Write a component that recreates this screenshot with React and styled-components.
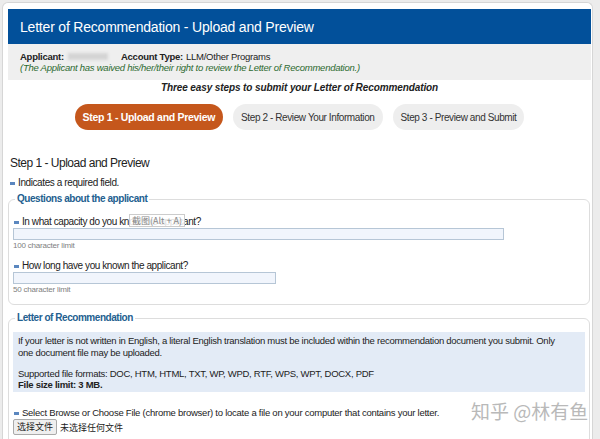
import styled, { createGlobalStyle } from "styled-components";

const Global = createGlobalStyle`
  html, body {
    margin: 0;
    background: #ececec;
    font-family: "Liberation Sans", Arial, sans-serif;
    color: #222;
  }
  * { box-sizing: border-box; }
`;

const Page = styled.div`
  position: relative;
  margin: 2px 0 0 2px;
  width: 591px;
  height: 437px;
  overflow: hidden;
  background: #fff;
  border: 1px solid #d6d6d6;
  border-bottom: none;
  border-radius: 6px 6px 0 0;
  padding: 6px 1px 0 5px;
`;

const Header = styled.div`
  background: #02509a;
  height: 35px;
  display: flex;
  align-items: center;
  padding: 1px 0 0 12px;
  color: #fff;
  font-size: 14px;
  letter-spacing: -0.2px;
`;

const Info = styled.div`
  background: #efefef;
  padding: 7px 12px 7px;
  font-size: 9.5px;
  line-height: 11px;
  letter-spacing: -0.25px;
`;

const InfoRow = styled.div`
  display: flex;
  gap: 3px;
  b { font-weight: bold; }
`;

const Blur = styled.span`
  display: inline-block;
  width: 40px;
  height: 7px;
  margin: 2px 10px 0 1px;
  background: #d4d4d4;
  filter: blur(1.5px);
`;

const Waived = styled.div`
  font-style: italic;
  color: #2d6a2f;
`;

const Intro = styled.div`
  text-align: center;
  font-size: 10px;
  line-height: 12px;
  letter-spacing: -0.1px;
  font-weight: bold;
  font-style: italic;
  margin-top: 2px;
`;

const Steps = styled.div`
  display: flex;
  justify-content: center;
  gap: 10px;
  margin-top: 10px;
`;

const StepPill = styled.div`
  height: 26px;
  border-radius: 13px;
  padding: 0 8px;
  display: flex;
  align-items: center;
  font-size: ${(p) => (p.$active ? "10.5px" : "10px")};
  letter-spacing: ${(p) => (p.$active ? "-0.3px" : "-0.4px")};
  font-weight: ${(p) => (p.$active ? "bold" : "normal")};
  background: ${(p) => (p.$active ? "#c5571c" : "#eeeeee")};
  color: ${(p) => (p.$active ? "#fff" : "#333")};
`;

const StepTitle = styled.h2`
  margin: 25px 0 0 2px;
  font-size: 12px;
  letter-spacing: -0.5px;
  font-weight: normal;
  line-height: 16px;
`;

const Bullet = styled.span`
  display: inline-block;
  width: 5px;
  height: 3px;
  background: #5b87bf;
  margin-right: 3px;
  vertical-align: middle;
`;

const Required = styled.div`
  font-size: 10px;
  line-height: 12px;
  letter-spacing: -0.4px;
  margin: 6px 0 0 2px;
`;

const Fieldset = styled.fieldset`
  margin: ${(p) => p.$top} 0 0 0;
  padding: 4px 4px ${(p) => p.$bottom} 4px;
  width: 582px;
  border: 1px solid #dddddd;
  border-radius: 6px;
`;

const Legend = styled.legend`
  font-size: 10px;
  line-height: 12px;
  letter-spacing: -0.45px;
  font-weight: bold;
  color: #23608f;
  padding: 0 2px;
  margin-left: 2px;
`;

const Question = styled.label`
  display: block;
  font-size: 10px;
  line-height: 12px;
  letter-spacing: -0.42px;
  margin: ${(p) => p.$top} 0 0 1px;
`;

const TextInput = styled.div`
  width: ${(p) => p.$width}px;
  height: 12px;
  background: #f1f5fc;
  border: 1px solid #b6c6d6;
`;

const Limit = styled.div`
  font-size: 8px;
  line-height: 10px;
  letter-spacing: -0.2px;
  color: #808080;
  margin-top: 1px;
`;

const Notice = styled.div`
  background: #e3ebf6;
  font-size: 9.5px;
  line-height: 12px;
  letter-spacing: -0.27px;
  padding: 3px 18px 2px 5px;
  margin-top: 4px;
  p { margin: 0 0 9px; }
  p:last-child { margin: 0; }
  b { display: block; line-height: 10px; }
`;

const SelectLine = styled.div`
  font-size: 9.5px;
  line-height: 12px;
  letter-spacing: -0.25px;
  margin: 15px 0 0 1px;
`;

const FileRow = styled.div`
  display: flex;
  align-items: center;
  gap: 3px;
  font-size: 9px;
  font-family: "Noto Sans CJK SC", sans-serif;
`;

const FileButton = styled.span`
  background: #efefef;
  border: 1px solid #aaa;
  border-radius: 2px;
  padding: 0 3px;
  height: 16px;
  line-height: 14px;
`;

const Tooltip = styled.div`
  position: absolute;
  left: 126px;
  top: 211px;
  font-size: 9px;
  color: #888;
  background: rgba(255, 255, 255, 0.85);
  border: 1px solid #ccc;
  padding: 0 2px;
  font-family: "Noto Sans CJK SC", sans-serif;
  line-height: 11px;
`;

const Watermark = styled.div`
  position: absolute;
  left: 471px;
  top: 397px;
  white-space: nowrap;
  font-size: 19px;
  color: #b9b9b9;
  font-family: "Noto Sans CJK SC", sans-serif;
  text-shadow: 0 0 2px #fff;
`;

export default function App() {
  return (
    <>
      <Global />
      <Page>
        <Header>Letter of Recommendation - Upload and Preview</Header>
        <Info>
          <InfoRow>
            <b>Applicant:</b>
            <Blur />
            <b>Account Type:</b>
            <span>LLM/Other Programs</span>
          </InfoRow>
          <Waived>(The Applicant has waived his/her/their right to review the Letter of Recommendation.)</Waived>
        </Info>
        <Intro>Three easy steps to submit your Letter of Recommendation</Intro>
        <Steps>
          <StepPill $active>Step 1 - Upload and Preview</StepPill>
          <StepPill>Step 2 - Review Your Information</StepPill>
          <StepPill>Step 3 - Preview and Submit</StepPill>
        </Steps>
        <StepTitle>Step 1 - Upload and Preview</StepTitle>
        <Required><Bullet />Indicates a required field.</Required>
        <Fieldset $top="4px" $bottom="9px">
          <Legend>Questions about the applicant</Legend>
          <Question $top="7px"><Bullet />In what capacity do you know this applicant?</Question>
          <TextInput $width={491} />
          <Limit>100 character limit</Limit>
          <Question $top="9px"><Bullet />How long have you known the applicant?</Question>
          <TextInput $width={263} />
          <Limit>50 character limit</Limit>
        </Fieldset>
        <Fieldset $top="7px" $bottom="12px">
          <Legend>Letter of Recommendation</Legend>
          <Notice>
            <p>If your letter is not written in English, a literal English translation must be included within the recommendation document you submit. Only one document file may be uploaded.</p>
            <p>Supported file formats: DOC, HTM, HTML, TXT, WP, WPD, RTF, WPS, WPT, DOCX, PDF<b>File size limit: 3 MB.</b></p>
          </Notice>
          <SelectLine><Bullet />Select Browse or Choose File (chrome browser) to locate a file on your computer that contains your letter.</SelectLine>
          <FileRow>
            <FileButton>选择文件</FileButton>
            <span>未选择任何文件</span>
          </FileRow>
        </Fieldset>
        <Tooltip>截图(Alt + A)</Tooltip>
      </Page>
      <Watermark>知乎 @林有鱼</Watermark>
    </>
  );
}
